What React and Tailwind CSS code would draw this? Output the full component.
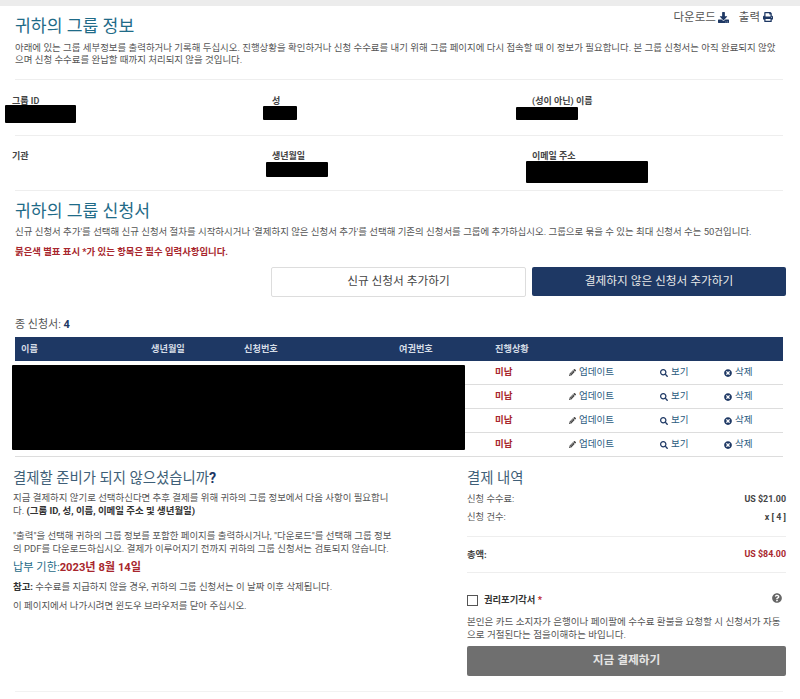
import React from 'react';
import { FaDownload, FaPrint, FaPencilAlt, FaSearch, FaTimesCircle, FaQuestionCircle } from 'react-icons/fa';

const KR = "font-['Roboto','Noto_Sans_CJK_KR',sans-serif]";

const Redact = ({ className }) => <div className={`absolute bg-black rounded-[1px] ${className}`} />;

const Field = ({ label, className }) => (
  <div className={`text-[9px] leading-3 font-semibold text-[#444] ${className}`}>{label}</div>
);

const Row = () => (
  <div className="flex h-6 items-center border-b border-[#ddd] text-[9.5px]">
    <div className="w-[480px]" />
    <div className="w-[74px] font-bold text-[#a8262d]">미납</div>
    <div className="flex w-[91px] items-center gap-[3px] text-[#2a5a80]">
      <FaPencilAlt className="h-[7px] w-[7px] text-[#444]" />
      업데이트
    </div>
    <div className="flex w-[64px] items-center gap-[3px] text-[#2a5a80]">
      <FaSearch className="h-[8px] w-[8px] text-[#1e3864]" />
      보기
    </div>
    <div className="flex items-center gap-[3px] text-[#2a5a80]">
      <FaTimesCircle className="h-[8px] w-[8px] text-[#1e3864]" />
      삭제
    </div>
  </div>
);

export default function App() {
  return (
    <div className={`relative h-[699px] w-[800px] overflow-hidden bg-white ${KR}`}>
      <div className="h-[6px] bg-[#ececec]" />

      <div className="relative px-[15px]">
        <div className="absolute right-[27px] top-[5px] flex items-center gap-[10px] text-[11.5px] leading-3 text-[#555]">
          <span className="flex items-center gap-[2px]">다운로드 <FaDownload className="h-[11px] w-[11px] text-[#1e3864]" /></span>
          <span className="flex items-center gap-[3px]">출력 <FaPrint className="h-[10px] w-[10px] text-[#1e3864]" /></span>
        </div>

        <h1 className="pt-[9px] text-[17.2px] font-normal leading-[22px] text-[#1f6b88]">귀하의 그룹 정보</h1>
        <p className="mt-[5px] w-[768px] text-[9.45px] leading-[12px] text-[#555]">
          아래에 있는 그룹 세부정보를 출력하거나 기록해 두십시오. 진행상황을 확인하거나 신청 수수료를 내기 위해 그룹 페이지에 다시 접속할 때 이 정보가 필요합니다. 본 그룹 신청서는 아직 완료되지 않았으며 신청 수수료를 완납할 때까지 처리되지 않을 것입니다.
        </p>

        <div className="mt-[13px] h-[56px] w-[768px] border-t border-[#eee] pt-[15px]">
          <div className="relative flex">
            <Field label="그룹 ID" className="ml-[-3px] w-[260px]" />
            <Field label="성" className="w-[260px]" />
            <Field label="(성이 아닌) 이름" />
          </div>
        </div>
        <div className="h-[55px] w-[768px] border-t border-[#eee] pt-[14px]">
          <div className="flex">
            <Field label="기관" className="ml-[-3px] w-[260px]" />
            <Field label="생년월일" className="w-[260px]" />
            <Field label="이메일 주소" />
          </div>
        </div>

        <div className="w-[768px] border-t border-[#eee]">
          <h2 className="pt-[9px] text-[17.2px] font-normal leading-[22px] text-[#1f6b88]">귀하의 그룹 신청서</h2>
          <p className="mt-[4px] text-[9.45px] leading-[12px] text-[#555]">
            신규 신청서 추가'를 선택해 신규 신청서 절차를 시작하시거나 '결제하지 않은 신청서 추가'를 선택해 기존의 신청서를 그룹에 추가하십시오. 그룹으로 묶을 수 있는 최대 신청서 수는 50건입니다.
          </p>
          <p className="mt-[8px] text-[9.4px] font-bold leading-[12px] text-[#a8262d]">
            붉은색 별표 표시 *가 있는 항목은 필수 입력사항입니다.
          </p>
        </div>

        <div className="mr-[-1px] mt-[9px] flex justify-end gap-[6px]">
          <button className="flex h-[30px] w-[255px] items-center justify-center rounded-[2px] border border-[#ddd] bg-white text-[11.7px] text-[#444]">
            신규 신청서 추가하기
          </button>
          <button className="flex h-[29px] w-[254px] items-center justify-center rounded-[2px] bg-[#1e3864] text-[11.7px] text-[#e8e8e8]">
            결제하지 않은 신청서 추가하기
          </button>
        </div>

        <div className="mt-[21px] text-[11px] leading-[14px] text-[#555]">
          종 신청서: <span className="font-bold text-[#1e3864]">4</span>
        </div>

        <div className="mt-[5px] w-[768px]">
          <div className="flex h-[24px] items-center bg-[#1e3864] pl-[6px] text-[9.2px] font-bold text-[#d5dce6]">
            <span className="w-[130px]">이름</span>
            <span className="w-[93px]">생년월일</span>
            <span className="w-[155px]">신청번호</span>
            <span className="w-[96px]">여권번호</span>
            <span>진행상황</span>
          </div>
          <Row />
          <Row />
          <Row />
          <Row />
        </div>
      </div>

      <div className="mt-[13px] flex">
        <div className="ml-[13px] w-[382px] text-[9.45px] leading-[13px] text-[#555]">
          <h3 className="text-[14.4px] font-normal leading-[18px] text-[#3f5f78]">결제할 준비가 되지 않으셨습니까<span className="font-bold text-[#1e3864]">?</span></h3>
          <p className="mt-[3px]">
            지금 결제하지 않기로 선택하신다면 추후 결제를 위해 귀하의 그룹 정보에서 다음 사항이 필요합니다. <b className="font-bold text-[#333]">(그룹 ID, 성, 이름, 이메일 주소 및 생년월일)</b>
          </p>
          <p className="mt-[12px]">
            "출력"을 선택해 귀하의 그룹 정보를 포함한 페이지를 출력하시거나, "다운로드"를 선택해 그룹 정보의 PDF를 다운로드하십시오. 결제가 이루어지기 전까지 귀하의 그룹 신청서는 검토되지 않습니다.
          </p>
          <p className="mt-[6px] text-[11.2px] leading-[14px] text-[#1f6b88]">
            납부 기한:<span className="font-bold text-[#a8262d]">2023년 8월 14일</span>
          </p>
          <p className="mt-[5px]"><b className="font-bold text-[#333]">참고:</b> 수수료를 지급하지 않을 경우, 귀하의 그룹 신청서는 이 날짜 이후 삭제됩니다.</p>
          <p className="mt-[6px]">이 페이지에서 나가시려면 윈도우 브라우저를 닫아 주십시오.</p>
        </div>

        <div className="ml-[72px] w-[319px] text-[9.3px] text-[#555]">
          <h3 className="text-[14.4px] font-normal leading-[18px] text-[#3f5f78]">결제 내역</h3>
          <div className="mt-[5px] flex justify-between leading-[12px]">
            <span>신청 수수료:</span><b className="text-[8.9px] font-bold text-[#444]">US $21.00</b>
          </div>
          <div className="mt-[6px] flex justify-between leading-[12px]">
            <span>신청 건수:</span><b className="text-[8.9px] font-bold text-[#444]">x [ 4 ]</b>
          </div>
          <div className="mt-[13px] flex h-[37px] items-center justify-between border-y border-[#eee] font-bold text-[#444]">
            <span>총액:</span><span className="text-[8.9px] text-[#a8262d]">US $84.00</span>
          </div>
          <div className="mt-[20px] flex items-start pr-[4px]">
            <div className="mt-[2px] h-[11px] w-[11px] border border-[#555] bg-white" />
            <span className="ml-[6px] flex-1 font-bold text-[#333]">권리포기각서 <span className="text-[#c0262d]">*</span></span>
            <FaQuestionCircle className="h-[10px] w-[10px] text-[#666]" />
          </div>
          <p className="mt-[8px] text-[9.55px] leading-[13px]">
            본인은 카드 소지자가 은행이나 페이팔에 수수료 환불을 요청할 시 신청서가 자동으로 거절된다는 점을이해하는 바입니다.
          </p>
          <button className="mt-[5px] flex h-[30px] w-full items-center justify-center rounded-[2px] bg-[#6f6f6f] text-[11.7px] font-semibold text-[#e4e4e4]">
            지금 결제하기
          </button>
        </div>
      </div>

      <div className="mx-[15px] mt-[15px] w-[768px] border-t border-[#f2f2f2]" />

      <Redact className="left-[5px] top-[105px] h-[18px] w-[71px]" />
      <Redact className="left-[263px] top-[106px] h-[14px] w-[34px]" />
      <Redact className="left-[516px] top-[107px] h-[13px] w-[62px]" />
      <Redact className="left-[266px] top-[162px] h-[15px] w-[62px]" />
      <Redact className="left-[526px] top-[161px] h-[22px] w-[122px]" />
      <Redact className="left-[12px] top-[365px] h-[85px] w-[453px]" />
    </div>
  );
}
